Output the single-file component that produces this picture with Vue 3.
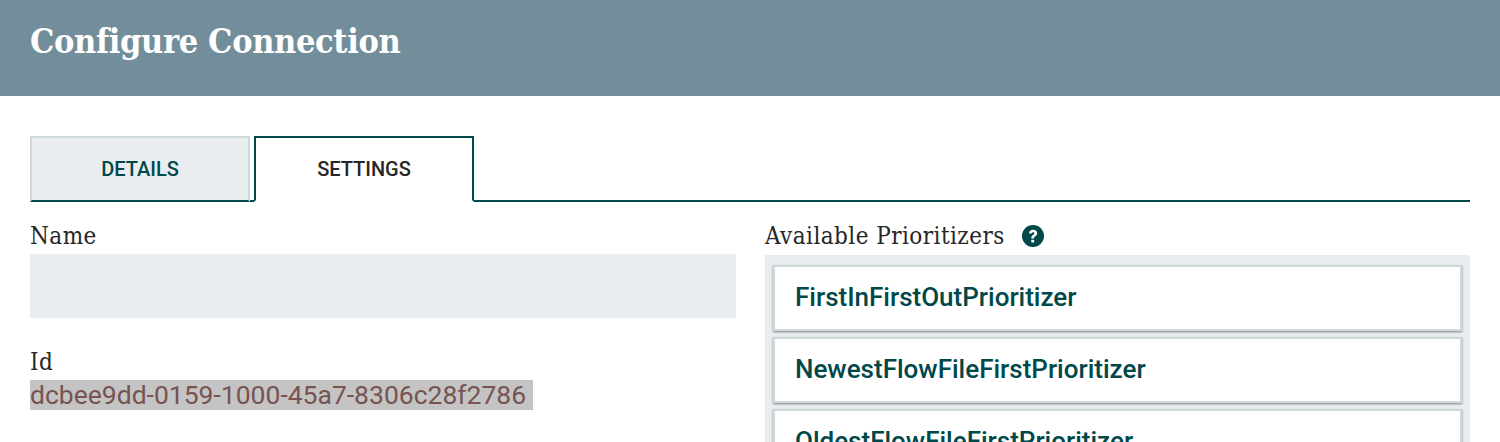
<template>
  <div class="dialog">
    <div class="dialog-header">Configure Connection</div>
    <div class="dialog-body">
      <div class="tabs">
        <div class="tab">DETAILS</div>
        <div class="tab active">SETTINGS</div>
      </div>
      <div class="columns">
        <div class="col-left">
          <div class="field-label">Name</div>
          <div class="name-input"></div>
          <div class="field-label id-label">Id</div>
          <div class="id-value"><span>dcbee9dd-0159-1000-45a7-8306c28f2786</span></div>
        </div>
        <div class="col-right">
          <div class="field-label">
            Available Prioritizers
            <svg class="help" viewBox="0 0 24 24">
              <circle cx="12" cy="12" r="12" fill="#004849" />
              <path d="M7.6 9.2c.2-2.6 2-4 4.6-4 2.5 0 4.4 1.5 4.4 3.7 0 1.7-1 2.6-2.1 3.3-1 .6-1.3 1-1.3 2v.4h-3v-.7c0-1.6.6-2.4 1.8-3.1 1-.6 1.5-1 1.5-1.7 0-.8-.6-1.3-1.4-1.3-.9 0-1.4.6-1.6 1.6z" fill="#fff" />
              <rect x="10.2" y="16.2" width="3" height="3" rx="0.4" fill="#fff" />
            </svg>
          </div>
          <div class="prioritizers">
            <div v-for="p in prioritizers" :key="p" class="prioritizer">{{ p }}</div>
          </div>
        </div>
      </div>
    </div>
  </div>
</template>

<script setup>
const prioritizers = [
  'FirstInFirstOutPrioritizer',
  'NewestFlowFileFirstPrioritizer',
  'OldestFlowFileFirstPrioritizer'
]
</script>

<style scoped>
.dialog {
  height: 442px;
  overflow: hidden;
  background: #fff;
}
.dialog-header {
  height: 96px;
  box-sizing: border-box;
  padding: 18px 30px 0;
  background: #728e9b;
  color: #fff;
  font-family: "DejaVu Serif", serif;
  font-stretch: condensed;
  font-weight: bold;
  font-size: 34px;
  line-height: 46px;
  letter-spacing: -0.35px;
}
.dialog-body {
  padding: 40px 30px 0;
}
.tabs {
  display: flex;
  gap: 4px;
  height: 66px;
  box-sizing: border-box;
  border-bottom: 2px solid #004849;
}
.tab {
  width: 220px;
  height: 66px;
  box-sizing: border-box;
  border: 2px solid #ccdadb;
  border-bottom: 2px solid #004849;
  background: #e9edf0;
  color: #004849;
  font-family: Roboto, "Liberation Sans", sans-serif;
  font-weight: 500;
  font-size: 20px;
  line-height: 62px;
  text-align: center;
}
.tab.active {
  border: 2px solid #004849;
  border-bottom: 2px solid #fff;
  background: #fff;
  color: #262626;
}
.columns {
  display: flex;
  gap: 29px;
}
.col-left {
  width: 706px;
}
.col-right {
  flex: 1;
}
.field-label {
  height: 52px;
  padding-top: 16px;
  box-sizing: border-box;
  color: #262626;
  font-family: "DejaVu Serif", serif;
  font-stretch: condensed;
  font-size: 24px;
  line-height: 28px;
  letter-spacing: 0.45px;
  display: flex;
  align-items: center;
  gap: 17px;
}
.name-input {
  height: 64px;
  background: #e9edf0;
}
.id-label {
  height: 62px;
  padding-top: 26px;
}
.id-value {
  font-family: Roboto, "Liberation Sans", sans-serif;
  font-size: 26.5px;
  line-height: 30px;
  color: #775351;
}
.id-value span {
  display: inline-block;
  padding-right: 7px;
  background: #c4c4c4;
}
.help {
  width: 22px;
  height: 22px;
  flex: none;
}
.prioritizers {
  margin-top: 1px;
  padding: 10px 8px 0;
  background: #e9edf0;
  display: flex;
  flex-direction: column;
  gap: 6px;
  height: 187px;
  box-sizing: border-box;
}
.prioritizer {
  height: 66px;
  flex: none;
  box-sizing: border-box;
  padding-left: 20px;
  border: 2px solid #ccdadb;
  background: #fff;
  box-shadow: 0 1px 2px rgba(0, 0, 0, 0.45);
  color: #004849;
  font-family: Roboto, "Liberation Sans", sans-serif;
  font-weight: 500;
  font-size: 26px;
  line-height: 60px;
}
</style>

<style>
body {
  margin: 0;
}
</style>
